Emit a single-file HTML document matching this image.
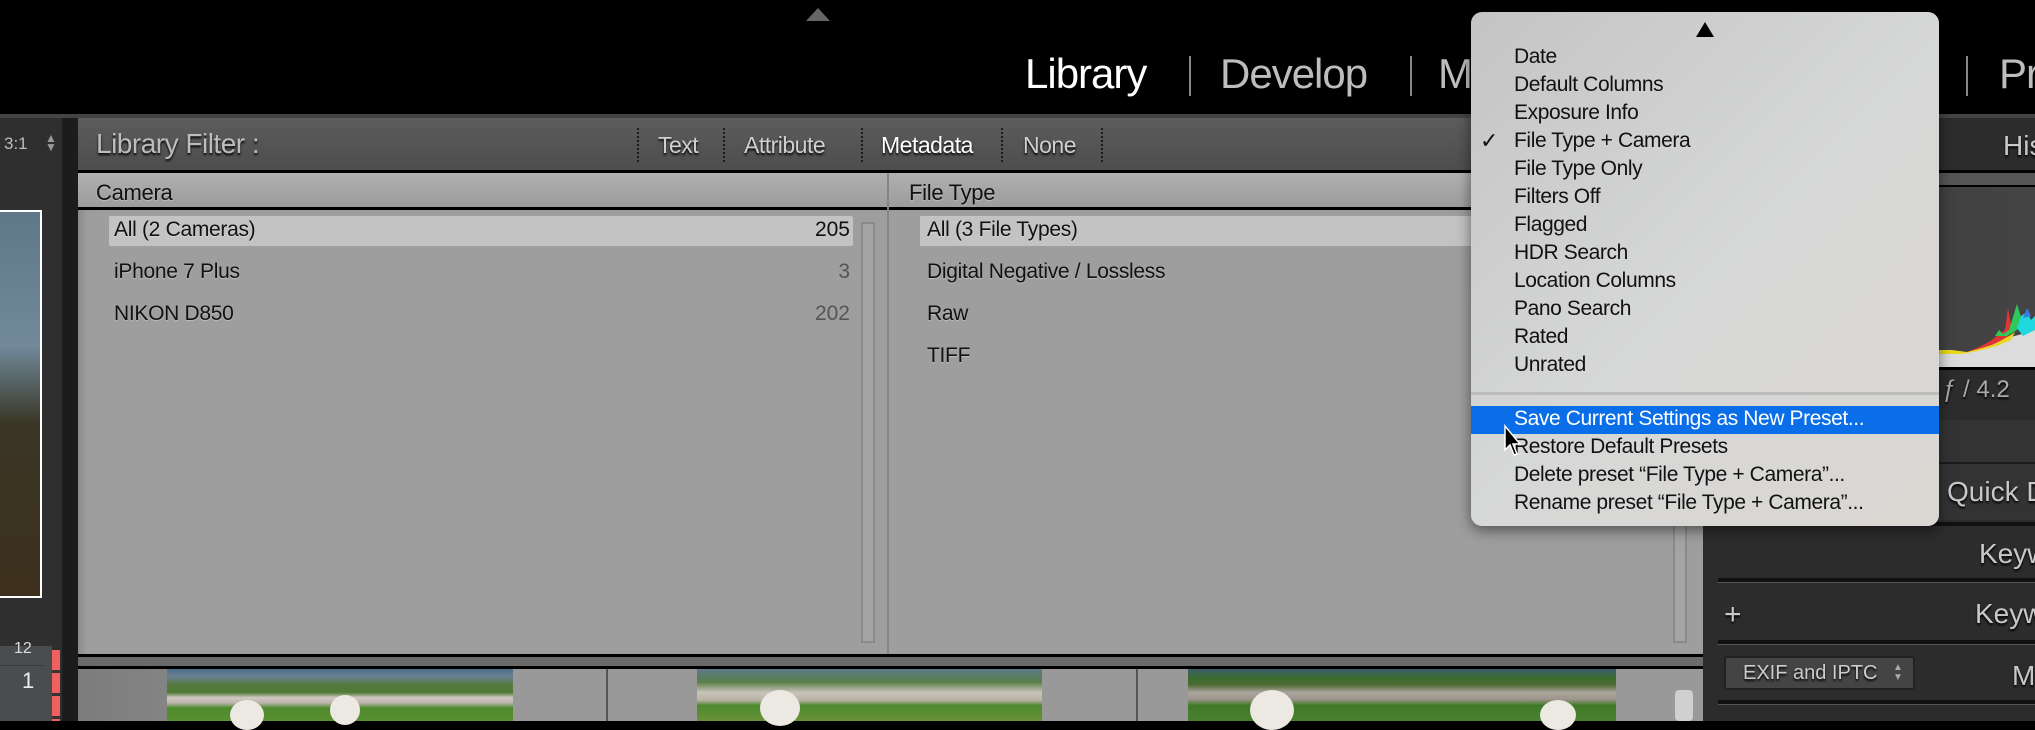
<!DOCTYPE html>
<html><head><meta charset="utf-8"><style>
*{margin:0;padding:0;box-sizing:border-box}
body{width:2035px;height:721px;overflow:hidden;background:#000;position:relative;font-family:"Liberation Sans",sans-serif}
.a{position:absolute;white-space:nowrap}
.mod{color:#bdbdbd;font-size:42px;top:50px;letter-spacing:-1px}
.sep{background:#888;width:2px;height:40px;top:56px}
.ft{color:#cfcfcf;font-size:23px;top:132px;text-shadow:0 2px 2px #000;letter-spacing:-.5px}
.dot{top:128px;height:34px;border-left:2px dotted #1a1a1a;width:0}
.li{color:#111;font-size:21px;text-shadow:0 1px 1px rgba(255,255,255,.35);letter-spacing:-.3px}
.cnt{color:#555;font-size:21px;text-align:right;width:60px}
.mi{left:1514px;font-size:21px;color:#111;letter-spacing:-.4px}
.rp{color:#c8c8c8;text-shadow:0 2px 2px #000;font-size:28px}
</style></head><body>
<div class="a" style="left:806px;top:8px;width:0;height:0;border-left:12px solid transparent;border-right:12px solid transparent;border-bottom:13px solid #666"></div>
<div class="a mod" style="left:1025px;color:#fff">Library</div>
<div class="a sep" style="left:1189px"></div>
<div class="a mod" style="left:1220px">Develop</div>
<div class="a sep" style="left:1410px"></div>
<div class="a mod" style="left:1438px">M</div>
<div class="a sep" style="left:1966px"></div>
<div class="a mod" style="left:1999px">Pr</div>
<div class="a" style="left:0;top:114px;width:2035px;height:4px;background:#444"></div>

<div class="a" style="left:0;top:118px;width:62px;height:603px;background:#2f2f2f"></div>
<div class="a" style="left:62px;top:118px;width:16px;height:603px;background:#1c1c1c"></div>
<div class="a" style="left:4px;top:134px;color:#bbb;font-size:17px">3:1</div>
<div class="a" style="left:45px;top:134px;color:#999;font-size:12px;line-height:9px">▲<br>▼</div>
<div class="a" style="left:0;top:210px;width:42px;height:388px;border:2px solid #fff;border-left:none;background:linear-gradient(#5f7889 0%,#71899a 35%,#3a3626 55%,#3d2f1c 100%)"></div>
<div class="a" style="left:0;top:646px;width:52px;height:75px;background:#4a4d50"></div>
<div class="a" style="left:52px;top:650px;width:8px;height:71px;background:repeating-linear-gradient(#f06060 0 20px,#333 20px 23px)"></div>
<div class="a" style="left:0;top:665px;width:44px;height:1px;background:#3a3a3a"></div>
<div class="a" style="left:22px;top:668px;color:#eee;font-size:22px">1</div>
<div class="a" style="left:14px;top:640px;color:#ddd;font-size:16px">12</div>

<div class="a" style="left:78px;top:118px;width:1625px;height:53px;background:linear-gradient(#5c5c5c,#4d4d4d)"></div>
<div class="a ft" style="left:96px;top:128px;font-size:28px;color:#bdbdbd">Library Filter :</div>
<div class="a dot" style="left:637px"></div>
<div class="a ft" style="left:658px">Text</div>
<div class="a dot" style="left:723px"></div>
<div class="a ft" style="left:744px">Attribute</div>
<div class="a dot" style="left:861px"></div>
<div class="a ft" style="left:881px;color:#fff">Metadata</div>
<div class="a dot" style="left:1001px"></div>
<div class="a ft" style="left:1023px">None</div>
<div class="a dot" style="left:1101px"></div>
<div class="a" style="left:78px;top:170px;width:1625px;height:3px;background:#000"></div>

<div class="a" style="left:78px;top:173px;width:1625px;height:34px;background:linear-gradient(#b0b0b0,#9c9c9c)"></div>
<div class="a li" style="left:96px;top:180px;font-size:22px">Camera</div>
<div class="a li" style="left:909px;top:180px;font-size:22px">File Type</div>
<div class="a" style="left:78px;top:207px;width:1625px;height:3px;background:#000"></div>

<div class="a" style="left:78px;top:210px;width:1625px;height:446px;background:#9e9e9e;box-shadow:inset 8px 0 8px -4px #888"></div>
<div class="a" style="left:887px;top:173px;width:2px;height:483px;background:#858585"></div>
<div class="a" style="left:109px;top:216px;width:744px;height:30px;background:#c3c3c3;border-radius:2px"></div>
<div class="a li" style="left:114px;top:218px">All (2 Cameras)</div>
<div class="a cnt" style="left:790px;top:218px;color:#111">205</div>
<div class="a li" style="left:114px;top:260px">iPhone 7 Plus</div>
<div class="a cnt" style="left:790px;top:260px">3</div>
<div class="a li" style="left:114px;top:302px">NIKON D850</div>
<div class="a cnt" style="left:790px;top:302px">202</div>
<div class="a" style="left:861px;top:222px;width:14px;height:421px;border:2px solid #8a8a8a;background:#a4a4a4"></div>

<div class="a" style="left:920px;top:216px;width:600px;height:30px;background:#c3c3c3"></div>
<div class="a li" style="left:927px;top:218px">All (3 File Types)</div>
<div class="a li" style="left:927px;top:260px">Digital Negative / Lossless</div>
<div class="a li" style="left:927px;top:302px">Raw</div>
<div class="a li" style="left:927px;top:344px">TIFF</div>
<div class="a" style="left:1673px;top:222px;width:14px;height:421px;border:2px solid #8a8a8a;background:#a4a4a4"></div>
<div class="a" style="left:78px;top:654px;width:1625px;height:3px;background:#000"></div>

<div class="a" style="left:78px;top:657px;width:1625px;height:10px;background:#6a6a6a"></div>
<div class="a" style="left:78px;top:666px;width:1625px;height:3px;background:#000"></div>
<div class="a" style="left:78px;top:669px;width:1625px;height:52px;background:linear-gradient(90deg,#7c7c7c,#999 20%,#999)"></div>
<div class="a" style="left:606px;top:669px;width:2px;height:52px;background:#555"></div>
<div class="a" style="left:1136px;top:669px;width:2px;height:52px;background:#555"></div>
<div class="a" style="left:167px;top:669px;width:346px;height:52px;background:linear-gradient(#4f6f8a 0,#6a8090 15%,#557a3e 30%,#4f7a36 45%,#cfc9c2 55%,#bdb6ae 65%,#4d8a2e 75%,#5a9030)"></div>
<div class="a" style="left:697px;top:669px;width:345px;height:52px;background:linear-gradient(#5d7a8a 0,#5a7f48 25%,#c9c2ba 45%,#b9b2a6 60%,#4d8a2e 70%,#6a9038)"></div>
<div class="a" style="left:1188px;top:669px;width:428px;height:52px;background:linear-gradient(#3f5c6c 0,#3a6e2e 18%,#4d6a33 30%,#aaa49c 45%,#9d968c 58%,#3f7a28 70%,#4a8030)"></div>
<div class="a" style="left:230px;top:700px;width:34px;height:30px;border-radius:50%;background:#ece8e2"></div>
<div class="a" style="left:330px;top:695px;width:30px;height:30px;border-radius:50%;background:#ece8e2"></div>
<div class="a" style="left:760px;top:690px;width:40px;height:36px;border-radius:50%;background:#ece8e2"></div>
<div class="a" style="left:1250px;top:690px;width:44px;height:40px;border-radius:50%;background:#ece8e2"></div>
<div class="a" style="left:1540px;top:700px;width:36px;height:30px;border-radius:50%;background:#ece8e2"></div>
<div class="a" style="left:1675px;top:690px;width:18px;height:31px;background:#d0d0d0;border-radius:4px"></div>

<div class="a" style="left:1703px;top:118px;width:332px;height:603px;background:#2c2c2c"></div>
<div class="a rp" style="left:2003px;top:130px">His</div>
<div class="a" style="left:1703px;top:170px;width:332px;height:3px;background:#000"></div>
<div class="a" style="left:1703px;top:173px;width:332px;height:12px;background:#555"></div>
<div class="a" style="left:1703px;top:185px;width:332px;height:2px;background:#000"></div>
<div class="a" style="left:1703px;top:187px;width:332px;height:180px;background:linear-gradient(90deg,#3a3a3a,#444)"></div>
<svg class="a" style="left:1937px;top:290px" width="98" height="78" viewBox="0 0 98 78">
<path d="M0 64 L25 63 L40 60 L55 54 L70 48 L85 44 L98 40 L98 78 L0 78 Z" fill="#dcdcdc"/>
<path d="M30 62 L40 58 L48 54 L55 50 L62 44 L68 40 L71 18 L75 40 L70 48 L55 55 L40 60 Z" fill="#e03535"/>
<path d="M0 60 L15 60 L30 62 L45 58 L58 54 L72 46 L78 42 L74 50 L60 56 L45 60 L25 64 L0 64 Z" fill="#e8d820"/>
<path d="M58 46 L62 40 L66 44 L72 40 L80 14 L85 30 L80 40 L70 46 Z" fill="#30c85a"/>
<path d="M80 38 L84 26 L90 22 L94 30 L98 26 L98 40 L86 46 Z" fill="#20d8e0"/>
<path d="M86 28 L90 18 L94 26 Z" fill="#3a7ae8"/>
</svg>
<div class="a" style="left:1703px;top:367px;width:332px;height:3px;background:#000"></div>
<div class="a rp" style="left:1943px;top:376px;font-size:24px;color:#aaa">ƒ / 4.2</div>
<div class="a" style="left:1703px;top:420px;width:332px;height:100px;background:#333"></div>
<div class="a" style="left:1703px;top:462px;width:332px;height:2px;background:#1a1a1a"></div>
<div class="a rp" style="left:1947px;top:476px">Quick D</div>
<div class="a" style="left:1703px;top:522px;width:332px;height:4px;background:#111"></div>
<div class="a rp" style="left:1979px;top:538px">Keyw</div>
<div class="a" style="left:1718px;top:578px;width:317px;height:5px;background:#111;border-bottom:1px solid #555"></div>
<div class="a rp" style="left:1724px;top:598px;font-size:30px">+</div>
<div class="a rp" style="left:1975px;top:598px">Keyw</div>
<div class="a" style="left:1718px;top:640px;width:317px;height:5px;background:#111;border-bottom:1px solid #555"></div>
<div class="a" style="left:1724px;top:656px;width:191px;height:34px;background:#444;border:2px solid #222;border-radius:3px"></div>
<div class="a rp" style="left:1743px;top:662px;font-size:20px;color:#ccc">EXIF and IPTC</div>
<div class="a" style="left:1893px;top:663px;color:#aaa;font-size:10px;line-height:10px">▲<br>▼</div>
<div class="a rp" style="left:2012px;top:660px">M</div>
<div class="a" style="left:1718px;top:700px;width:317px;height:5px;background:#111;border-bottom:1px solid #555"></div>

<div class="a" style="left:1471px;top:12px;width:468px;height:514px;border-radius:11px;background:linear-gradient(135deg,#c4c4c4,#d6d7d7 50%,#dad7d2);box-shadow:0 4px 14px rgba(0,0,0,.5)"></div>
<div class="a" style="left:1696px;top:22px;width:0;height:0;border-left:9px solid transparent;border-right:9px solid transparent;border-bottom:15px solid #000"></div>
<div class="a mi" style="top:45px">Date</div>
<div class="a mi" style="top:73px">Default Columns</div>
<div class="a mi" style="top:101px">Exposure Info</div>
<div class="a" style="left:1480px;top:128px;font-size:22px;color:#111">✓</div>
<div class="a mi" style="top:129px">File Type + Camera</div>
<div class="a mi" style="top:157px">File Type Only</div>
<div class="a mi" style="top:185px">Filters Off</div>
<div class="a mi" style="top:213px">Flagged</div>
<div class="a mi" style="top:241px">HDR Search</div>
<div class="a mi" style="top:269px">Location Columns</div>
<div class="a mi" style="top:297px">Pano Search</div>
<div class="a mi" style="top:325px">Rated</div>
<div class="a mi" style="top:353px">Unrated</div>
<div class="a" style="left:1471px;top:392px;width:468px;height:3px;background:#bcbcbc"></div>
<div class="a" style="left:1471px;top:406px;width:468px;height:28px;background:#0a6ee8"></div>
<div class="a mi" style="top:407px;color:#fff">Save Current Settings as New Preset...</div>
<div class="a mi" style="top:435px">Restore Default Presets</div>
<div class="a mi" style="top:463px">Delete preset “File Type + Camera”...</div>
<div class="a mi" style="top:491px">Rename preset “File Type + Camera”...</div>
<svg class="a" style="left:1503px;top:424px" width="20" height="34" viewBox="0 0 20 34"><path d="M2 2 L2 26 L7 21 L11 31 L14 30 L10 20 L17 20 Z" fill="#000" stroke="#fff" stroke-width="1.5"/></svg>
</body></html>
